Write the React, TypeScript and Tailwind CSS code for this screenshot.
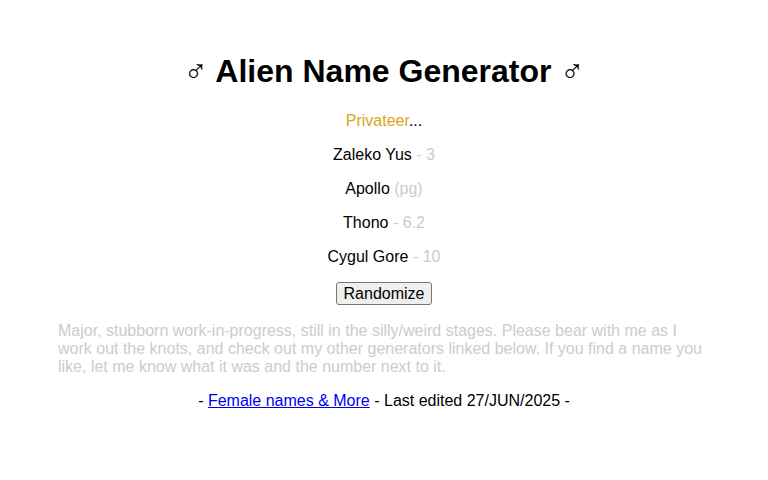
import React, { useState } from "react";

const NAMES: { name: string; tag: string; paren?: boolean }[] = [
  { name: "Zaleko Yus", tag: "3" },
  { name: "Apollo", tag: "pg", paren: true },
  { name: "Thono", tag: "6.2" },
  { name: "Cygul Gore", tag: "10" },
];

const App = () => {
  const [names] = useState(NAMES);

  return (
    <div
      className="min-h-[480px] bg-white text-black text-[16px] leading-[18px]"
      style={{ fontFamily: '"Liberation Sans", Arial, sans-serif' }}
    >
      <div className="flex flex-col items-center pt-[53px]">
        <h1 className="h-[37px] text-[32px] leading-[37px] font-bold">
          <span className="font-normal">♂</span> Alien Name Generator{" "}
          <span className="font-normal">♂</span>
        </h1>

        <p className="mt-[22px]">
          <span className="text-[#daa520]">Privateer</span>...
        </p>

        {names.map((n) => (
          <p key={n.name} className="mt-[16px]">
            {n.name}{" "}
            <span className="text-[#cccccc]">
              {n.paren ? `(${n.tag})` : `- ${n.tag}`}
            </span>
          </p>
        ))}

        <button className="mt-[16px] h-[23px] w-[96px] rounded-[3px] border border-[#767676] bg-[#efefef] text-[16px] leading-[18px] text-black">
          Randomize
        </button>

        <p className="mt-[17px] w-[652px] text-[#cccccc]">
          Major, stubborn work-in-progress, still in the silly/weird stages.
          Please bear with me as I work out the knots, and check out my other
          generators linked below. If you find a name you like, let me know what
          it was and the number next to it.
        </p>

        <p className="mt-[16px]">
          -{" "}
          <a href="#" className="text-[#0000ee] underline">
            Female names &amp; More
          </a>{" "}
          - Last edited 27/JUN/2025 -
        </p>
      </div>
    </div>
  );
};

export default App;
